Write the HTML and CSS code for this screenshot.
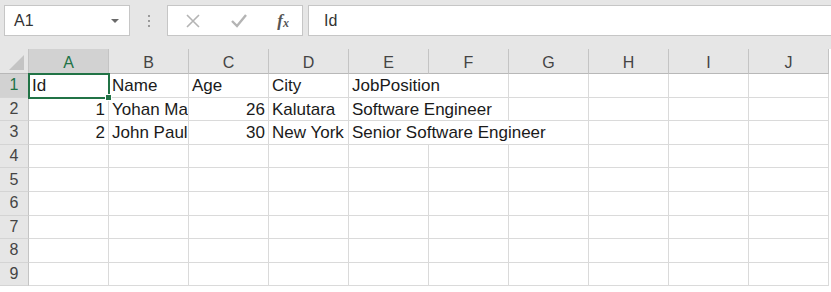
FILE: index.html
```html
<!DOCTYPE html>
<html lang="en">
<head>
    <meta charset="UTF-8">
    <title>Hoja de calculo</title>
    <link rel="stylesheet" href="styles.css">
</head>
<body>
    <div class="barra">
        <div class="nombre">
            <span>A1</span>
            <span class="flecha"></span>
        </div>
        <div class="puntos"><i></i><i></i><i></i></div>
        <div class="botones">
            <svg width="16" height="16" viewBox="0 0 16 16"><path d="M2 2 L14 14 M14 2 L2 14" stroke="#b4b4b4" stroke-width="1.6" fill="none"/></svg>
            <svg width="18" height="16" viewBox="0 0 18 16"><path d="M2 8 L7 13 L16 2" stroke="#b4b4b4" stroke-width="2.4" fill="none"/></svg>
            <span class="fx">f<sub>x</sub></span>
        </div>
        <div class="formula">Id</div>
    </div>

    <div class="hoja">
        <!-- encabezados -->
        <div class="esquina"><span class="triangulo"></span></div>
        <div class="col sel">A</div>
        <div class="col">B</div>
        <div class="col">C</div>
        <div class="col">D</div>
        <div class="col">E</div>
        <div class="col">F</div>
        <div class="col">G</div>
        <div class="col">H</div>
        <div class="col">I</div>
        <div class="col">J</div>

        <!-- fila 1 -->
        <div class="fila sel">1</div>
        <div class="celda activa">Id<span class="relleno"></span></div>
        <div class="celda">Name</div>
        <div class="celda">Age</div>
        <div class="celda">City</div>
        <div class="celda span2">JobPosition</div>
        <div class="celda"></div>
        <div class="celda"></div>
        <div class="celda"></div>
        <div class="celda"></div>

        <!-- fila 2 -->
        <div class="fila">2</div>
        <div class="celda num">1</div>
        <div class="celda">Yohan Ma</div>
        <div class="celda num">26</div>
        <div class="celda">Kalutara</div>
        <div class="celda span2">Software Engineer</div>
        <div class="celda"></div>
        <div class="celda"></div>
        <div class="celda"></div>
        <div class="celda"></div>

        <!-- fila 3 -->
        <div class="fila">3</div>
        <div class="celda num">2</div>
        <div class="celda">John Paul</div>
        <div class="celda num">30</div>
        <div class="celda">New York</div>
        <div class="celda span3">Senior Software Engineer</div>
        <div class="celda"></div>
        <div class="celda"></div>
        <div class="celda"></div>

        <!-- filas vacias -->
        <div class="fila">4</div>
        <div class="celda"></div><div class="celda"></div><div class="celda"></div><div class="celda"></div><div class="celda"></div><div class="celda"></div><div class="celda"></div><div class="celda"></div><div class="celda"></div><div class="celda"></div>
        <div class="fila">5</div>
        <div class="celda"></div><div class="celda"></div><div class="celda"></div><div class="celda"></div><div class="celda"></div><div class="celda"></div><div class="celda"></div><div class="celda"></div><div class="celda"></div><div class="celda"></div>
        <div class="fila">6</div>
        <div class="celda"></div><div class="celda"></div><div class="celda"></div><div class="celda"></div><div class="celda"></div><div class="celda"></div><div class="celda"></div><div class="celda"></div><div class="celda"></div><div class="celda"></div>
        <div class="fila">7</div>
        <div class="celda"></div><div class="celda"></div><div class="celda"></div><div class="celda"></div><div class="celda"></div><div class="celda"></div><div class="celda"></div><div class="celda"></div><div class="celda"></div><div class="celda"></div>
        <div class="fila">8</div>
        <div class="celda"></div><div class="celda"></div><div class="celda"></div><div class="celda"></div><div class="celda"></div><div class="celda"></div><div class="celda"></div><div class="celda"></div><div class="celda"></div><div class="celda"></div>
        <div class="fila">9</div>
        <div class="celda"></div><div class="celda"></div><div class="celda"></div><div class="celda"></div><div class="celda"></div><div class="celda"></div><div class="celda"></div><div class="celda"></div><div class="celda"></div><div class="celda"></div>
    </div>
</body>
</html>
```

FILE: styles.css
```css
body {
    margin: 0;
    padding: 0;
    background-color: #ffffff;
    font-family: "Liberation Sans", Arial, sans-serif;
    overflow: hidden;
}

.barra {
    display: flex;
    align-items: flex-start;
    height: 49px;
    padding: 5px 0 0 4px;
    box-sizing: border-box;
    background-color: #e6e6e6;
}

.nombre {
    display: flex;
    align-items: center;
    justify-content: space-between;
    width: 126px;
    height: 31px;
    padding: 0 10px 0 9px;
    box-sizing: border-box;
    background-color: #ffffff;
    border: 1px solid #c6c6c6;
    font-size: 16px;
    color: #333333;
}

.flecha {
    width: 0;
    height: 0;
    border-left: 4px solid transparent;
    border-right: 4px solid transparent;
    border-top: 4px solid #6a6a6a;
}

.puntos {
    display: flex;
    flex-direction: column;
    gap: 3px;
    margin: 10px 17px 0 18px;
}

.puntos i {
    width: 2px;
    height: 2px;
    background-color: #9a9a9a;
}

.botones {
    display: flex;
    align-items: center;
    justify-content: space-between;
    width: 136px;
    height: 31px;
    padding: 0 13px 0 17px;
    box-sizing: border-box;
    background-color: #ffffff;
    border: 1px solid #c6c6c6;
}

.fx {
    font-family: "Liberation Serif", serif;
    font-style: italic;
    font-weight: bold;
    font-size: 17px;
    color: #555555;
}

.fx sub {
    font-size: 12px;
    vertical-align: -1px;
}

.formula {
    flex: 1;
    height: 31px;
    margin-left: 5px;
    padding-left: 15px;
    box-sizing: border-box;
    background-color: #ffffff;
    border: 1px solid #c6c6c6;
    border-right: none;
    font-size: 16px;
    line-height: 29px;
    color: #333333;
}

.hoja {
    display: grid;
    grid-template-columns: 29px repeat(10, 80px);
    grid-template-rows: 25px;
    grid-auto-rows: 23.6px;
    font-size: 17px;
    color: #1a1a1a;
}

.esquina {
    position: relative;
    background-color: #e6e6e6;
    border-right: 1px solid #c4c4c4;
    border-bottom: 1px solid #b8b8b8;
}

.triangulo {
    position: absolute;
    right: 4px;
    bottom: 3px;
    width: 0;
    height: 0;
    border-left: 15px solid transparent;
    border-bottom: 15px solid #c4c4c4;
}

.col {
    display: flex;
    align-items: center;
    justify-content: center;
    background-color: #e6e6e6;
    border-right: 1px solid #c4c4c4;
    border-bottom: 1px solid #b8b8b8;
    font-size: 16px;
    color: #444444;
    padding-top: 3px;
}

.fila {
    display: flex;
    align-items: center;
    justify-content: center;
    background-color: #e6e6e6;
    border-right: 1px solid #c4c4c4;
    border-bottom: 1px solid #d4d4d4;
    font-size: 16px;
    color: #444444;
}

.col.sel,
.fila.sel {
    background-color: #d2d2d2;
    color: #217346;
}

.celda {
    position: relative;
    border-right: 1px solid #dadada;
    border-bottom: 1px solid #dadada;
    padding: 0 3px;
    white-space: nowrap;
    overflow: hidden;
    line-height: 23px;
}

.num {
    text-align: right;
}

.span2 {
    grid-column: span 2;
}

.span3 {
    grid-column: span 3;
}

.activa {
    overflow: visible;
    outline: 2px solid #217346;
    outline-offset: -1px;
    z-index: 1;
}

.relleno {
    position: absolute;
    right: -4px;
    bottom: -4px;
    width: 5px;
    height: 5px;
    background-color: #217346;
    border: 1px solid #ffffff;
}
```
